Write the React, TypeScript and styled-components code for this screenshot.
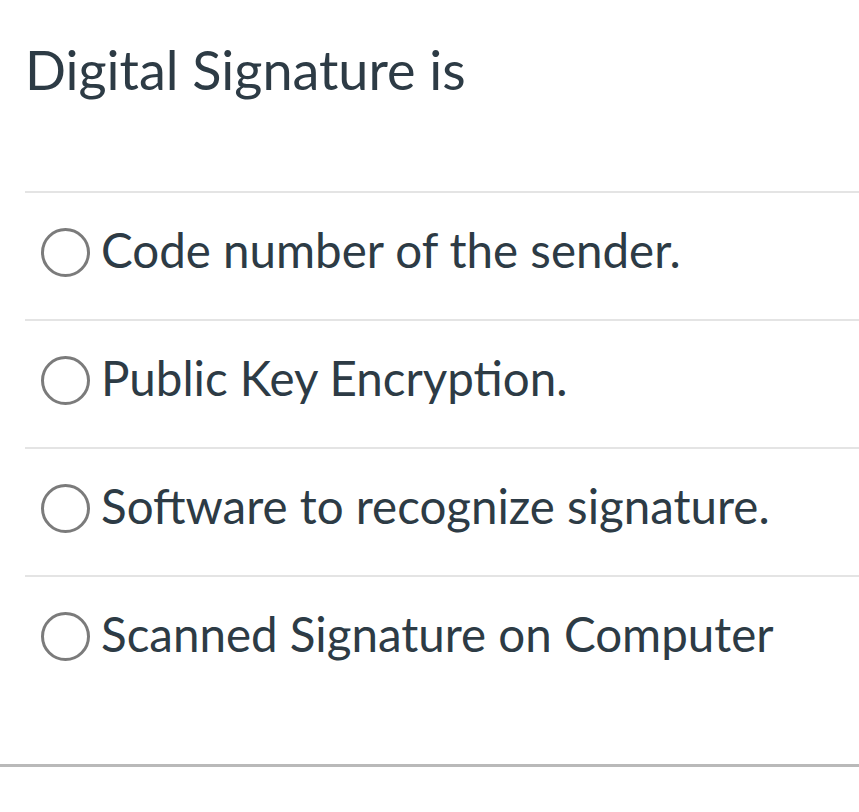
import styled, { createGlobalStyle } from "styled-components";

const GlobalStyle = createGlobalStyle`
  body {
    margin: 0;
    background: #fff;
    font-family: Lato, "Noto Sans", sans-serif;
    color: #2d3b45;
  }
`;

const Page = styled.div`
  width: 859px;
  padding-top: 37px;
`;

const Question = styled.div`
  padding-left: 25px;
`;

const Title = styled.h1`
  margin: 0 0 88px;
  font-size: 54px;
  line-height: 66px;
  font-weight: 400;
`;

const Answers = styled.ul`
  list-style: none;
  margin: 0;
  padding: 0;
`;

// each row is 128px tall with the divider on top
const Answer = styled.li`
  display: flex;
  align-items: center;
  gap: 11px;
  height: 114px;
  box-sizing: content-box;
  border-top: 2px solid #e4e4e4;
  padding-left: 16px;
  padding-bottom: 12px;
`;

// plain circle, the radio isn't checked in any row
const Radio = styled.span`
  flex: none;
  width: 43px;
  height: 43px;
  border: 3px solid #7b7b7b;
  border-radius: 50%;
  margin-top: 4px;
`;

const Label = styled.span`
  font-size: 47.5px;
  line-height: 56px;
`;

const Footer = styled.div`
  margin-top: 61px;
  height: 3px;
  background: #b9b9b9;
`;

const options = [
  "Code number of the sender.",
  "Public Key Encryption.",
  "Software to recognize signature.",
  "Scanned Signature on Computer",
];

export default function App() {
  return (
    <Page>
      <GlobalStyle />
      <Question>
        <Title>Digital Signature is</Title>
        <Answers>
          {options.map((text) => (
            <Answer key={text}>
              <Radio />
              <Label>{text}</Label>
            </Answer>
          ))}
        </Answers>
      </Question>
      <Footer />
    </Page>
  );
}
